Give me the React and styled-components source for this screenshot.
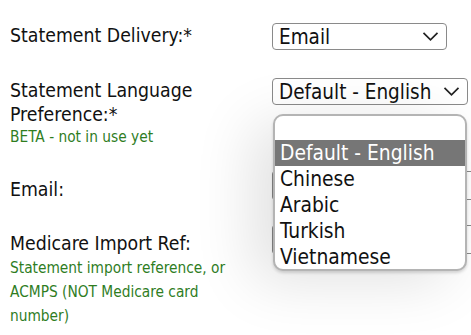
import React from "react";
import styled, { createGlobalStyle } from "styled-components";

const GlobalStyle = createGlobalStyle`
  body {
    margin: 0;
    background: #ffffff;
    font-family: "DejaVu Sans Condensed", "DejaVu Sans", sans-serif;
    color: #111;
  }
`;

const Form = styled.div`
  position: relative;
  width: 471px;
  height: 335px;
  overflow: hidden;
  padding: 0 0 0 10px;
  box-sizing: border-box;
`;

const Row = styled.div`
  display: grid;
  grid-template-columns: 262px 1fr;
  align-items: start;
  margin-top: ${(p) => p.$top}px;
`;

const LabelCol = styled.div`
  display: flex;
  flex-direction: column;
`;

const Label = styled.div`
  font-size: 19.3px;
  line-height: 24px;
  padding-top: ${(p) => p.$pad || 0}px;
`;

const Hint = styled.div`
  font-size: 15.3px;
  line-height: 24px;
  color: #2f7d1f;
  margin-top: ${(p) => p.$top || 0}px;
`;

const FieldCol = styled.div`
  position: relative;
`;

const Select = styled.div`
  box-sizing: border-box;
  width: ${(p) => p.$w}px;
  height: 27px;
  border: 1px solid #8a8a8a;
  border-radius: 4px;
  background: #fff;
  display: flex;
  align-items: center;
  justify-content: space-between;
  padding: 0 7px 0 6px;
  font-size: 20.5px;
`;

const Input = styled.div`
  box-sizing: border-box;
  width: 260px;
  height: 29px;
  border: 1px solid #8a8a8a;
  border-radius: 3px;
  background: #fff;
`;

const Menu = styled.div`
  position: absolute;
  left: 1px;
  top: 36px;
  width: 194px;
  height: 157px;
  box-sizing: border-box;
  background: #fff;
  border: 2px solid #b4b4b4;
  border-radius: 10px;
  overflow: hidden;
  padding-top: 24px;
  box-shadow: 0 2px 3px rgba(0, 0, 0, 0.15), -20px 10px 60px rgba(0, 0, 0, 0.12);
  z-index: 5;
`;

const Option = styled.div`
  height: 26px;
  line-height: 26px;
  font-size: 20.8px;
  padding: 0 5px;
  background: ${(p) => (p.$active ? "#767676" : "transparent")};
  color: ${(p) => (p.$active ? "#fff" : "#111")};
  white-space: nowrap;
`;

const Chevron = () => (
  <svg width="17" height="11" viewBox="0 0 17 11" fill="none">
    <path d="M1.5 1.8 L8.5 8.8 L15.5 1.8" stroke="#222" strokeWidth="1.7" />
  </svg>
);

const languages = ["Default - English", "Chinese", "Arabic", "Turkish", "Vietnamese"];

export default function App() {
  return (
    <>
      <GlobalStyle />
      <Form>
        <Row $top={23}>
          <Label $pad={1}>Statement Delivery:*</Label>
          <FieldCol>
            <Select $w={175}>
              <span>Email</span>
              <Chevron />
            </Select>
          </FieldCol>
        </Row>
        <Row $top={28}>
          <LabelCol>
            <Label $pad={1}>Statement Language Preference:*</Label>
            <Hint $top={-2}>BETA - not in use yet</Hint>
          </LabelCol>
          <FieldCol>
            <Select $w={196}>
              <span>Default - English</span>
              <Chevron />
            </Select>
            <Menu>
              {languages.map((l, i) => (
                <Option key={l} $active={i === 0}>
                  {l}
                </Option>
              ))}
            </Menu>
          </FieldCol>
        </Row>
        <Row $top={22}>
          <Label $pad={7}>Email:</Label>
          <FieldCol>
            <Input />
          </FieldCol>
        </Row>
        <Row $top={23}>
          <LabelCol>
            <Label $pad={7}>Medicare Import Ref:</Label>
            <Hint $top={0}>
              Statement import reference, or
              <br />
              ACMPS (NOT Medicare card
              <br />
              number)
            </Hint>
          </LabelCol>
          <FieldCol>
            <Input />
          </FieldCol>
        </Row>
      </Form>
    </>
  );
}
